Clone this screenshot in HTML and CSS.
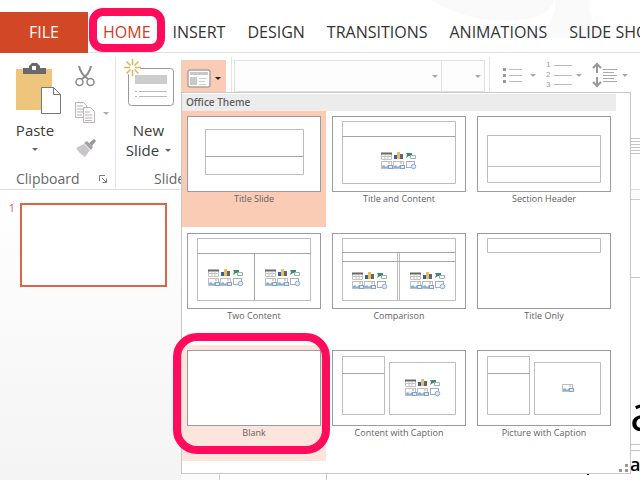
FILE: index.html
```
<!DOCTYPE html>
<html lang="en">
<head>
<meta charset="utf-8">
<title>Presentation</title>
<link rel="stylesheet" href="styles.css">
</head>
<body>
<svg class="defs" aria-hidden="true">
  <symbol id="picture" viewBox="0 0 13 9">
    <rect x=".5" y=".5" width="10" height="7" fill="#fff" stroke="#b9c0c8"/>
    <path d="M1 7V5l2-1 2 2 2-2 2 3z" fill="#8fb0d6"/>
    <circle cx="8" cy="2" r="1" fill="#eebd8b"/>
    <rect x="7.500" y="4.500" width="4" height="3" fill="#e4eefa" stroke="#78a3d4"/>
  </symbol>
  <symbol id="content" viewBox="0 0 36 18">
    <path d="M.5 2v5.500h10V2M1 4.500h9M4 3v4M7 3v4" fill="none" stroke="#c3c3c3"/>
    <path d="M0 .5h11v2H0z" fill="#666"/>
    <path d="M13 3h3v4h-3z" fill="#2f629e"/>
    <path d="M16 0h3v7h-3z" fill="#edbd63"/>
    <path d="M19 2h3v5h-3z" fill="#666"/>
    <path d="M25 1h6v3h-3l-3 2 1-3z" fill="#3f8b6b"/>
    <path d="M29.500 3.500h5v3h-5z" fill="#fff" stroke="#8fbba7"/>
    <use href="#picture" x="0" y="9" width="13" height="9"/>
    <use href="#picture" x="12" y="9" width="13" height="9"/>
    <rect x="25.500" y="9.500" width="8" height="6" fill="#fff" stroke="#a9adb2"/>
    <circle cx="32.500" cy="14.500" r="2.300" fill="#dce9f8" stroke="#86add9"/>
  </symbol>
</svg>

<nav class="tabs">
  <svg class="pattern" viewBox="0 0 210 40" aria-hidden="true">
    <path d="M0 0h125c-8 18-30 22-62 20C38 19 20 10 0 0z"/>
    <path d="M125 0h35c-4 18 8 34 30 38H95c25-8 32-22 30-38z"/>
  </svg>
  <a class="tab file" href="#">FILE</a>
  <a class="tab home" href="#">HOME</a>
  <a class="tab" href="#">INSERT</a>
  <a class="tab" href="#">DESIGN</a>
  <a class="tab" href="#">TRANSITIONS</a>
  <a class="tab" href="#">ANIMATIONS</a>
  <a class="tab" href="#">SLIDE SHOW</a>
</nav>

<header class="ribbon">
  <section class="group clipboard">
    <div class="tools">
      <button class="big paste" type="button">
        <svg width="48" height="52" viewBox="0 0 48 52" aria-hidden="true">
          <path d="M2 6h36v41H2z" fill="#edc67c"/>
          <path d="M9 11V5h6V3l3-3h5l3 3v2h6v6z" fill="#696969"/>
          <path d="M18 3h4v4h-4z" fill="#fff"/>
          <path d="M27.500 24.500h12l7 7v19h-19z" fill="#fff" stroke="#777"/>
          <path d="M39.500 24.500v7h7" fill="none" stroke="#777"/>
        </svg>
        <span>Paste</span><span class="caret"></span>
      </button>
      <div class="small-tools">
        <button type="button" aria-label="Cut">
          <svg width="20" height="22" viewBox="0 0 20 22" fill="none" stroke="#8b8b8b" stroke-width="1.500" aria-hidden="true"><path d="M4 1c1 5 3 9 9 13M16 1c-1 5-3 9-9 13" stroke-width="2"/><circle cx="4.500" cy="17" r="3.500"/><circle cx="15.500" cy="17" r="3.500"/></svg>
        </button>
        <button type="button" aria-label="Copy">
          <svg width="20" height="22" viewBox="0 0 20 22" fill="#fafafa" stroke="#bbb5ba" aria-hidden="true"><path d="M.5.5h8l3 3v12H.5zM2 4h6M2 7h6M2 10h6M2 13h5"/><path d="M8.500 5.500h7l4 4v11h-11zM10 10h5M10 13h7M10 16h7M10 18.500h7"/></svg>
          <span class="caret pale"></span>
        </button>
        <button type="button" aria-label="Format Painter">
          <svg width="22" height="18" viewBox="0 0 22 18" aria-hidden="true"><path d="M1 9l8-4 6 6-5 7C7 16 3 13 1 9z" fill="#c9c6c9"/><path d="M9 4l3-2 6 6-2 3z" fill="#a5a1a5"/><path d="M14 4l5-4 2 2-4 5z" fill="#999"/></svg>
        </button>
      </div>
    </div>
    <div class="group-name">Clipboard
      <svg width="8" height="8" viewBox="0 0 8 8" fill="none" stroke="#777" aria-hidden="true"><path d="M.5 6V.5H6M3 3l4 4M7.500 3.500v4h-4"/></svg>
    </div>
  </section>

  <section class="group slides">
    <div class="tools">
      <button class="big new-slide" type="button">
        <svg width="50" height="50" viewBox="0 0 50 50" aria-hidden="true">
          <rect x="4.500" y="10.500" width="45" height="37" rx="3" fill="#fff" stroke="#999"/>
          <path d="M11 17h32v9H11z" fill="#ccc"/>
          <path d="M11 33.500h2M15 33.500h28M11 38.500h2M15 38.500h28" stroke="#bbb"/>
          <circle cx="8.500" cy="9.500" r="8" fill="#fff"/>
          <path d="M8.500 1v6M8.500 12v6M0 9.500h6M11 9.500h6M2.500 3.500l4 4M10.500 11.500l4 4M14.500 3.500l-4 4M6.500 11.500l-4 4" stroke="#e5b45c" stroke-width="1.600"/>
        </svg>
        <span>New</span><span class="with-caret">Slide <span class="caret"></span></span>
      </button>
      <button class="layout-button" type="button" aria-label="Layout">
        <svg width="24" height="19" viewBox="0 0 24 19" aria-hidden="true"><rect x="1" y="1" width="22" height="17" rx="2" fill="#fff" stroke="#aaa4a2" stroke-width="1.500"/><path d="M3 3h18v3H3zM3 8h7v8H3z" fill="#c8c8c8"/><path d="M12 9.500h8M12 12.500h6M12 15.500h7" stroke="#ccc"/></svg>
        <span class="caret dark"></span>
      </button>
    </div>
    <div class="group-name">Slides</div>
  </section>

  <section class="group font">
    <button class="combo family" type="button" aria-label="Font"><span class="caret pale"></span></button>
    <button class="combo size" type="button" aria-label="Font size"><span class="caret pale"></span></button>
  </section>

  <section class="group paragraph">
    <button type="button" aria-label="Bullets">
      <svg width="19" height="18" viewBox="0 0 19 18" aria-hidden="true"><path d="M6 3.500h13M6 9.500h13M6 15.500h13" stroke="#bbb"/><path d="M0 2h3v3H0zM0 8h3v3H0zM0 14h3v3H0z" fill="#999"/></svg>
      <span class="caret pale"></span>
    </button>
    <button type="button" aria-label="Numbering">
      <span class="digits"><span>1</span><span>2</span><span>3</span></span>
      <svg width="18" height="22" viewBox="0 0 18 22" aria-hidden="true"><path d="M0 1.500h18M0 11.500h18M0 20.500h18" stroke="#bbb"/></svg>
      <span class="caret pale"></span>
    </button>
    <button type="button" aria-label="Line spacing">
      <svg width="26" height="26" viewBox="0 0 26 26" aria-hidden="true"><path d="M5 1v10M1 6l4-4 4 4M5 15v10M1 20l4 4 4-4" fill="none" stroke="#999" stroke-width="2"/><path d="M11 7.500h14M11 10.500h11M11 13.500h14M11 16.500h11M11 19.500h14" stroke="#aaa"/></svg>
      <span class="caret pale"></span>
    </button>
  </section>
  <div class="stripes"></div>
</header>

<main class="workspace">
  <aside class="slide-list">
    <span class="slide-number">1</span>
    <div class="slide-preview"></div>
  </aside>
  <div class="canvas">
    <div class="slide">
      <div class="holder title-holder"><span>a</span></div>
      <div class="holder subtitle-holder"><span>ac</span></div>
    </div>
  </div>
</main>

<div class="gallery">
  <h2>Office Theme</h2>
  <div class="layouts">
    <button class="layout selected" type="button">
      <svg class="thumb" viewBox="0 0 134 76" aria-hidden="true"><path class="box" d="M18.500 13.500h98v45h-98z"/><path class="box strong" d="M18.500 40.500h98"/></svg>
      <span>Title Slide</span>
    </button>
    <button class="layout" type="button">
      <svg class="thumb" viewBox="0 0 134 76" aria-hidden="true"><path class="box" d="M10.500 5.500h113v62h-113z"/><path class="box strong" d="M10.500 20.500h113"/><use href="#content" x="49" y="36" width="36" height="18"/></svg>
      <span>Title and Content</span>
    </button>
    <button class="layout" type="button">
      <svg class="thumb" viewBox="0 0 134 76" aria-hidden="true"><path class="box" d="M10.500 19.500h113v47h-113zM10.500 50.500h113"/></svg>
      <span>Section Header</span>
    </button>
    <button class="layout" type="button">
      <svg class="thumb" viewBox="0 0 134 76" aria-hidden="true"><path class="box" d="M10.500 5.500h113v62h-113z"/><path class="box strong" d="M10.500 20.500h113M67.500 20v47"/><use href="#content" x="21" y="36" width="36" height="18"/><use href="#content" x="78" y="36" width="36" height="18"/></svg>
      <span>Two Content</span>
    </button>
    <button class="layout" type="button">
      <svg class="thumb" viewBox="0 0 134 76" aria-hidden="true"><path class="box" d="M10.500 5.500h113v62h-113zM65.500 19v48M67.500 19v48"/><path class="box strong" d="M10.500 19.500h113M10.500 28.500h113"/><use href="#content" x="20" y="39" width="36" height="18"/><use href="#content" x="78" y="39" width="36" height="18"/></svg>
      <span>Comparison</span>
    </button>
    <button class="layout" type="button">
      <svg class="thumb" viewBox="0 0 134 76" aria-hidden="true"><path class="box" d="M10.500 5.500h113v14h-113z"/></svg>
      <span>Title Only</span>
    </button>
    <button class="layout hovered" type="button">
      <svg class="thumb" viewBox="0 0 134 76" aria-hidden="true"></svg>
      <span>Blank</span>
    </button>
    <button class="layout" type="button">
      <svg class="thumb" viewBox="0 0 134 76" aria-hidden="true"><path class="box" d="M10.500 6.500h42v58h-42zM57.500 12.500h66v52h-66z"/><path class="box strong" d="M10.500 23.500h42"/><use href="#content" x="73" y="29" width="36" height="18"/></svg>
      <span>Content with Caption</span>
    </button>
    <button class="layout" type="button">
      <svg class="thumb" viewBox="0 0 134 76" aria-hidden="true"><path class="box" d="M10.500 6.500h42v58h-42zM57.500 12.500h66v52h-66z"/><path class="box strong" d="M10.500 23.500h42"/><use href="#picture" x="85" y="34" width="13" height="9"/></svg>
      <span>Picture with Caption</span>
    </button>
  </div>
  <svg class="grip" width="10" height="8" viewBox="0 0 10 8" aria-hidden="true"><path d="M6 0h3v3H6zM0 5h3v3H0zM6 5h3v3H6z" fill="#999"/></svg>
</div>
</body>
</html>
```
FILE: styles.css
```
* { box-sizing: border-box; }

body {
  margin: 0;
  height: 100vh;
  overflow: hidden;
  display: flex;
  flex-direction: column;
  position: relative;
  background: #fff;
  color: #3b3b3b;
  font-family: "Open Sans", "Noto Sans", sans-serif;
  font-size: 15px;
}

button {
  margin: 0;
  padding: 0;
  border: 0;
  background: none;
  color: inherit;
  font: inherit;
}

svg { display: block; flex: none; }
.defs { position: absolute; width: 0; height: 0; }

.caret {
  display: inline-block;
  flex: none;
  border: 3px solid transparent;
  border-top-color: #666;
  border-bottom: 0;
}
.caret.pale { border-top-color: #aaa; }
.caret.dark { border-top-color: #222; }

/* Tab strip */
.tabs {
  position: relative;
  flex: none;
  display: flex;
  gap: 22px;
  height: 53px;
  padding-top: 12px;
  border-bottom: 1px solid #e2e2e2;
  white-space: nowrap;
}
.pattern {
  position: absolute;
  top: 0;
  right: 0;
  width: 210px;
  fill: #fafafa;
}
.tab {
  position: relative;
  flex: none;
  color: #333;
  font-size: 16px;
  line-height: 41px;
  text-decoration: none;
}
.file {
  width: 88px;
  height: 41px;
  margin-right: -7px;
  background: #d24726;
  color: #fff;
  text-align: center;
}
.home { color: #c9401f; background: #fff; }
.home::after {
  content: "";
  position: absolute;
  inset: -4px -14px 0;
  border: 8px solid #ff0d5c;
  border-radius: 14px;
}

/* Ribbon */
.ribbon {
  position: relative;
  flex: none;
  display: flex;
  height: 137px;
  padding-top: 4px;
  border-bottom: 1px solid #dedede;
}
.group {
  position: relative;
  flex: none;
  border-right: 1px solid #e4e4e4;
}
.tools { display: flex; }
.group-name {
  position: absolute;
  bottom: 0;
  left: 16px;
  right: 8px;
  display: flex;
  align-items: center;
  justify-content: space-between;
  color: #666;
  font-size: 14px;
  line-height: 20px;
}
.big {
  display: flex;
  flex-direction: column;
  align-items: center;
  line-height: 20px;
}
.clipboard { width: 116px; padding-left: 8px; }
.paste { width: 54px; padding-top: 6px; }
.paste svg { align-self: flex-end; margin-bottom: 5px; }
.paste .caret { margin-top: 8px; }
.small-tools {
  display: flex;
  flex-direction: column;
  gap: 15px;
  padding: 8px 0 0 13px;
}
.small-tools button { display: flex; align-items: center; gap: 8px; }

.slides { width: 116px; }
.slides .group-name { left: 38px; }
.new-slide { width: 65px; padding-top: 1px; }
.new-slide svg { margin-bottom: 12px; }
.with-caret { display: flex; align-items: center; gap: 6px; }
.layout-button {
  display: flex;
  align-items: center;
  justify-content: center;
  gap: 4px;
  width: 45px;
  height: 36px;
  margin-top: 3px;
  background: #facbb5;
}

.font { display: flex; flex: 0 0 258px; padding: 3px 4px 0 2px; }
.combo {
  display: flex;
  align-items: center;
  justify-content: flex-end;
  height: 32px;
  padding-right: 3px;
  border: 1px solid #e2e2e2;
  background: #fdfdfd;
}
.family { flex: 1; }
.size { width: 43px; border-left: 0; }
.paragraph {
  display: flex;
  gap: 10px;
  height: 36px;
  padding-left: 13px;
  border-right: 0;
}
.paragraph button { display: flex; align-items: center; gap: 8px; }
.paragraph button + button { gap: 4px; }
.digits {
  display: flex;
  flex-direction: column;
  color: #999;
  font-family: "Liberation Sans", sans-serif;
  font-size: 8px;
  line-height: 10px;
}
.stripes {
  position: absolute;
  right: 0;
  bottom: 35px;
  width: 10px;
  height: 16px;
  background: repeating-linear-gradient(#c4c4c4 0 1px, #fff 1px 3px);
}

/* Workspace */
.workspace { flex: 1; display: flex; min-height: 0; }
.slide-list {
  flex: 0 0 181px;
  display: flex;
  gap: 5px;
  padding: 13px 14px 0 9px;
  background: linear-gradient(#fff, #f4f4f4);
}
.slide-number { color: #d94a3f; font-size: 10px; line-height: 10px; }
.slide-preview {
  flex: 1;
  height: 84px;
  border: 2px solid #dc6547;
  background: #fff;
}
.canvas {
  flex: 1;
  padding: 9px 0 0 38px;
  background: #fbfbfb;
}
.slide {
  position: relative;
  height: 100%;
  border: 1px solid #ccc;
  border-width: 1px 0 0 1px;
  background: #fff;
  color: #000;
}
.holder {
  position: absolute;
  left: 106px;
  right: 0;
  border: 1px solid #c4c4c4;
  border-right: 0;
}
.holder span { position: absolute; left: 303px; }
.title-holder { top: 77px; height: 168px; }
.title-holder span { bottom: 4px; font-size: 49px; line-height: 56px; }
.subtitle-holder { top: 250px; bottom: -8px; }
.subtitle-holder span { top: 1px; font-size: 18px; line-height: 24px; font-weight: 600; }
.subtitle-holder::before {
  content: "";
  position: absolute;
  top: 22px;
  left: 260px;
  width: 2px;
  height: 2px;
  background: #000;
}

/* Layout gallery */
.gallery {
  position: absolute;
  top: 92px;
  left: 181px;
  width: 450px;
  height: 382px;
  border: 1px solid #c8c8c8;
  background: #fff;
  color: #626262;
}
.gallery h2 {
  margin: 1px 14px 0 0;
  padding-left: 4px;
  background: #ececec;
  font-size: 10px;
  line-height: 17px;
  font-weight: 600;
}
.layouts {
  display: grid;
  grid-template-columns: repeat(3, 144px);
  grid-auto-rows: 116px;
  gap: 1px;
}
.layout {
  position: relative;
  display: flex;
  flex-direction: column;
  align-items: center;
  padding-top: 5px;
  font-size: 9px;
  line-height: 14px;
}
.thumb {
  width: 134px;
  height: 76px;
  outline: 1px solid #9a9ca3;
  outline-offset: -1px;
  background: #fff;
}
.box { fill: none; stroke: #bdbdbd; }
.strong { stroke: #a5a5a5; }
.selected { background: #facbb5; }
.hovered { background: #fde4dc; }
.hovered::after {
  content: "";
  position: absolute;
  inset: -12px -4px 7px -9px;
  border: 8px solid #ff0d5c;
  border-radius: 24px;
}
.grip { position: absolute; right: 1px; bottom: 1px; }
```
